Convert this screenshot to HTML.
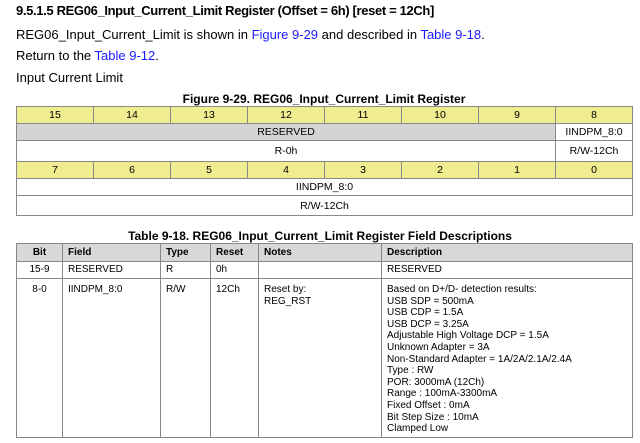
<!DOCTYPE html>
<html><head><style>
body{margin:0;background:#fff;font-family:"Liberation Sans",Arial,sans-serif;color:#000;width:640px;height:443px;position:relative;overflow:hidden}
.a{position:absolute;white-space:nowrap}
a{color:#1a1aff;text-decoration:none}
table{border-collapse:collapse;position:absolute;font-size:10.5px;table-layout:fixed}
td{border:1px solid #888;padding:0;text-align:center;overflow:hidden;white-space:nowrap}
.y td{background:#f0ec90}
.t2 td{text-align:left;vertical-align:top;padding:0 5px;font-size:10px}
.t2 tr.h td{background:#d8d8d8;font-weight:bold;line-height:17px}
.t2 tr.r td{line-height:16px}
.t2 tr.b td{line-height:11.6px;padding-top:5px;height:153px}
</style></head><body>
<div class="a" style="left:16px;top:3px;font-size:13px;font-weight:bold;letter-spacing:-0.35px">9.5.1.5 REG06_Input_Current_Limit Register (Offset = 6h) [reset = 12Ch]</div>
<div class="a" style="left:16px;top:27px;font-size:13px">REG06_Input_Current_Limit is shown in <a>Figure 9-29</a> and described in <a>Table 9-18</a>.</div>
<div class="a" style="left:16px;top:48px;font-size:13px">Return to the <a>Table 9-12</a>.</div>
<div class="a" style="left:16px;top:70px;font-size:13px">Input Current Limit</div>
<div class="a" style="left:0;width:648px;text-align:center;top:92px;font-size:12px;font-weight:bold">Figure 9-29. REG06_Input_Current_Limit Register</div>
<table style="left:16px;top:106px;width:617px">
<colgroup><col span="8" style="width:77px"></colgroup>
<tr class="y" style="height:17px"><td>15</td><td>14</td><td>13</td><td>12</td><td>11</td><td>10</td><td>9</td><td>8</td></tr>
<tr style="height:17px"><td colspan="7" style="background:#d4d4d4">RESERVED</td><td>IINDPM_8:0</td></tr>
<tr style="height:21px"><td colspan="7">R-0h</td><td>R/W-12Ch</td></tr>
<tr class="y" style="height:17px"><td>7</td><td>6</td><td>5</td><td>4</td><td>3</td><td>2</td><td>1</td><td>0</td></tr>
<tr style="height:17px"><td colspan="8">IINDPM_8:0</td></tr>
<tr style="height:20px"><td colspan="8">R/W-12Ch</td></tr>
</table>
<div class="a" style="left:0;width:640px;text-align:center;top:229px;font-size:12px;font-weight:bold">Table 9-18. REG06_Input_Current_Limit Register Field Descriptions</div>
<table class="t2" style="left:16px;top:243px;width:617px">
<colgroup><col style="width:46px"><col style="width:98px"><col style="width:50px"><col style="width:48px"><col style="width:123px"><col></colgroup>
<tr class="h"><td style="text-align:center">Bit</td><td>Field</td><td>Type</td><td>Reset</td><td>Notes</td><td>Description</td></tr>
<tr class="r"><td style="text-align:center">15-9</td><td>RESERVED</td><td>R</td><td>0h</td><td></td><td>RESERVED</td></tr>
<tr class="b"><td style="text-align:center">8-0</td><td>IINDPM_8:0</td><td>R/W</td><td>12Ch</td><td>Reset by:<br>REG_RST</td><td>Based on D+/D- detection results:<br>USB SDP = 500mA<br>USB CDP = 1.5A<br>USB DCP = 3.25A<br>Adjustable High Voltage DCP = 1.5A<br>Unknown Adapter = 3A<br>Non-Standard Adapter = 1A/2A/2.1A/2.4A<br>Type : RW<br>POR: 3000mA (12Ch)<br>Range : 100mA-3300mA<br>Fixed Offset : 0mA<br>Bit Step Size : 10mA<br>Clamped Low</td></tr>
</table>
</body></html>
